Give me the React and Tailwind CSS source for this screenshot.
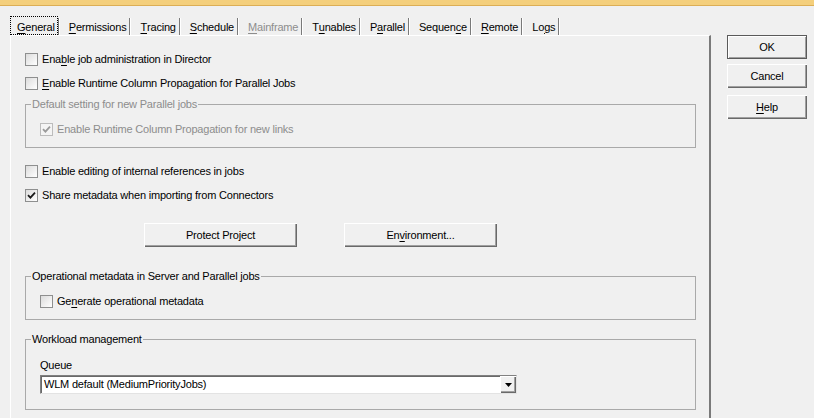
import React from "react";

// Tabs of the project properties dialog. `key` is the index of the underlined access letter.
const tabs = [
  { label: "General", key: 0, selected: true },
  { label: "Permissions", key: 0 },
  { label: "Tracing", key: 0 },
  { label: "Schedule", key: 0 },
  { label: "Mainframe", key: 0, disabled: true },
  { label: "Tunables", key: 1 },
  { label: "Parallel", key: 1 },
  { label: "Sequence", key: 6 },
  { label: "Remote", key: 0 },
  { label: "Logs", key: 2 },
];

const Accel = ({ text, at }) => {
  if (at == null || at < 0) return <>{text}</>;
  return (
    <>
      {text.slice(0, at)}
      <span className="underline underline-offset-[2px]">{text[at]}</span>
      {text.slice(at + 1)}
    </>
  );
};

const Checkbox = ({ checked, disabled }) => (
  <span
    className={
      "w-[13px] h-[13px] shrink-0 border flex items-center justify-center " +
      (disabled
        ? "border-[#bcbcbc] bg-[#f4f4f4]"
        : "border-[#8e8f8f] bg-gradient-to-br from-[#dcdcdc] to-white")
    }
  >
    {checked && (
      <svg width="9" height="9" viewBox="0 0 9 9">
        <path
          d="M1 4.2 L3.4 6.6 L8 1.6"
          fill="none"
          stroke={disabled ? "#9a9a9a" : "#1a1a1a"}
          strokeWidth="1.8"
        />
      </svg>
    )}
  </span>
);

const CheckRow = ({ label, at, checked, disabled }) => (
  <div className="h-[24px] flex items-center gap-[4px]">
    <Checkbox checked={checked} disabled={disabled} />
    <span className={disabled ? "text-[#8d8d8d]" : ""}>
      <Accel text={label} at={at} />
    </span>
  </div>
);

const Group = ({ title, disabled, className, children }) => (
  <fieldset className={"border border-[#a9a9a9] px-[14px] " + className}>
    <legend
      className={
        "-ml-[9px] px-[1px] leading-[13px] " + (disabled ? "text-[#8d8d8d]" : "")
      }
    >
      {title}
    </legend>
    {children}
  </fieldset>
);

const WinButton = ({ children, isDefault, className }) => (
  <button
    className={
      "h-[24px] bg-[#f0f0f0] text-black flex items-center justify-center " +
      (isDefault
        ? "border border-[#5a5a5a] shadow-[inset_1px_1px_0_#fff,inset_-1px_-1px_0_#a0a0a0] "
        : "shadow-[inset_1px_1px_0_#fff,inset_-1px_-1px_0_#696969,inset_-2px_-2px_0_#a0a0a0] ") +
      className
    }
  >
    {children}
  </button>
);

export default function App() {
  return (
    <div className="w-[814px] h-[418px] overflow-hidden bg-[#f0f0f0] text-[11px] leading-[13px] tracking-[-0.2px] text-black font-['Liberation_Sans',Arial,sans-serif]">
      <div className="h-[6px] bg-[#f4cf7c] border-b border-[#dcae55]" />

      <div className="flex">
        {/* tab control */}
        <div className="w-[711px] pl-[10px] pt-[10px]">
          <div className="flex h-[19px] items-stretch">
            {tabs.map((t) => (
              <div key={t.label} className="flex items-stretch">
                <div
                  className={
                    "flex items-center pt-[3px] pl-[7px] pr-[3px] " +
                    (t.selected ? "outline outline-1 outline-dotted outline-black -outline-offset-1 " : "") +
                    (t.disabled ? "text-[#8d8d8d]" : "")
                  }
                >
                  <Accel text={t.label} at={t.key} />
                </div>
                <div className="flex mt-[2px] mr-[2px]">
                  <span className="w-px bg-[#7a7a7a]" />
                  <span className="w-px bg-white" />
                </div>
              </div>
            ))}
          </div>

          <div className="h-[383px] border-t border-l border-white border-r-2 border-r-[#7a7a7a] pl-[14px] pr-[13px] pt-[11px]">
            <CheckRow label="Enable job administration in Director" at={3} />
            <CheckRow label="Enable Runtime Column Propagation for Parallel Jobs" at={0} />

            <Group title="Default setting for new Parallel jobs" disabled className="mt-[3px] pt-[6px] pb-[6px]">
              <CheckRow label="Enable Runtime Column Propagation for new links" checked disabled />
            </Group>

            <div className="mt-[11px]">
              <CheckRow label="Enable editing of internal references in jobs" />
              <CheckRow label="Share metadata when importing from Connectors" checked />
            </div>

            <div className="flex mt-[16px] ml-[119px] gap-[47px]">
              <WinButton className="w-[153px]">
                <Accel text="Protect Project" at={11} />
              </WinButton>
              <WinButton className="w-[153px]">
                <Accel text="Environment..." at={2} />
              </WinButton>
            </div>

            <Group title="Operational metadata in Server and Parallel jobs" className="mt-[23px] pt-[6px] pb-[6px]">
              <CheckRow label="Generate operational metadata" at={2} />
            </Group>

            <Group title="Workload management" className="mt-[13px] pt-[13px] pb-[15px]">
              <div>Queue</div>
              <div className="mt-[3px] w-[477px] h-[19px] flex bg-white border border-t-[#808080] border-l-[#808080] border-b-[#e3e3e3] border-r-[#e3e3e3] shadow-[inset_1px_1px_0_#696969]">
                <div className="flex-1 flex items-center pl-[3px]">
                  WLM default (MediumPriorityJobs)
                </div>
                <div className="w-[16px] h-full bg-[#f0f0f0] flex items-center justify-center shadow-[inset_1px_1px_0_#fff,inset_-1px_-1px_0_#696969,inset_-2px_-2px_0_#a0a0a0]">
                  <svg width="7" height="4" viewBox="0 0 7 4">
                    <path d="M0 0 H7 L3.5 4 Z" fill="#000" />
                  </svg>
                </div>
              </div>
            </Group>
          </div>
        </div>

        {/* dialog buttons */}
        <div className="pl-[16px] pt-[29px] flex flex-col">
          <WinButton isDefault className="w-[80px]">OK</WinButton>
          <WinButton className="w-[80px] mt-[5px]">Cancel</WinButton>
          <WinButton className="w-[80px] mt-[7px]">
            <Accel text="Help" at={0} />
          </WinButton>
        </div>
      </div>
    </div>
  );
}
